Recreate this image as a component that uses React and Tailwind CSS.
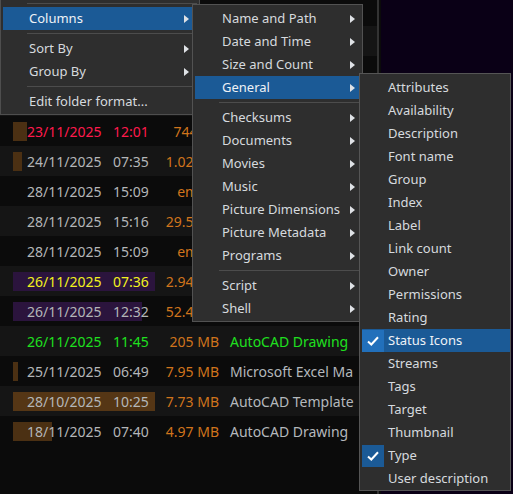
import React from 'react';

const rows = [
    { date: '23/11/2025', time: '12:01', size: '744 KB', tone: 'text-[#ff1a4d]', bar: 14, barColor: 'bg-[#4b3013]' },
    { date: '24/11/2025', time: '07:35', size: '1.02 MB', tone: 'text-[#b4b6b8]', bar: 9, barColor: 'bg-[#4b3013]' },
    { date: '28/11/2025', time: '15:09', size: 'empty', tone: 'text-[#b4b6b8]' },
    { date: '28/11/2025', time: '15:16', size: '29.5 MB', tone: 'text-[#b4b6b8]' },
    { date: '28/11/2025', time: '15:09', size: 'empty', tone: 'text-[#b4b6b8]' },
    { date: '26/11/2025', time: '07:36', size: '2.94 MB', tone: 'text-[#f2f21e]', bar: 142, barColor: 'bg-[#2b143d]' },
    { date: '26/11/2025', time: '12:32', size: '52.4 MB', tone: 'text-[#b4b6b8]', bar: 129, barColor: 'bg-[#2b143d]' },
    { date: '26/11/2025', time: '11:45', size: '205 MB', type: 'AutoCAD Drawing', tone: 'text-[#1fe01f]', typeTone: 'text-[#1fe01f]' },
    { date: '25/11/2025', time: '06:49', size: '7.95 MB', type: 'Microsoft Excel Ma', tone: 'text-[#b4b6b8]', bar: 5, barColor: 'bg-[#4b3013]' },
    { date: '28/10/2025', time: '10:25', size: '7.73 MB', type: 'AutoCAD Template', tone: 'text-[#b4b6b8]', bar: 142, barColor: 'bg-[#553615]' },
    { date: '18/11/2025', time: '07:40', size: '4.97 MB', type: 'AutoCAD Drawing', tone: 'text-[#b4b6b8]', bar: 39, barColor: 'bg-[#4b3013]' },
];

const Arrow = () => (
    <svg width="5" height="8" viewBox="0 0 5 8" className="shrink-0">
        <polygon points="0,0 5,4 0,8" fill="#dfe2e6" />
    </svg>
);

const Check = () => (
    <svg width="12" height="10" viewBox="0 0 12 10">
        <path d="M1 5.5 L4.3 8.5 L11 1.2" stroke="#ffffff" strokeWidth="2" fill="none" />
    </svg>
);

const Sep = ({ inset }) => (
    <div className="h-[7px] flex items-center">
        <div className={`h-px flex-1 bg-[#4c4c4c] ${inset}`} />
    </div>
);

const Item = ({ label, sub, active, pl, pr }) => (
    <div className={`h-[23px] flex items-center justify-between ${pl} ${pr} ${active ? 'bg-[#1b5a96] text-[#eef2f6]' : 'text-[#d6dade]'}`}>
        <span className="whitespace-nowrap">{label}</span>
        {sub && <Arrow />}
    </div>
);

const FileRow = ({ row, light }) => (
    <div className={`h-[30px] flex items-center whitespace-nowrap ${light ? 'bg-[#151515]' : 'bg-[#0b0b0b]'}`}>
        {row && (
            <>
                <div className={`relative shrink-0 ml-[13px] h-[19px] w-[145px] flex items-center ${row.tone}`}>
                    {row.bar && <div className={`absolute left-0 top-0 h-full ${row.barColor}`} style={{ width: row.bar }} />}
                    <span className="relative w-[100px] pl-[14px]">{row.date}</span>
                    <span className="relative">{row.time}</span>
                </div>
                <span className="shrink-0 w-[61px] text-right text-[#d0741c]">{row.size}</span>
                {row.type && <span className={`ml-[11px] ${row.typeTone || 'text-[#b4b8bc]'}`}>{row.type}</span>}
            </>
        )}
    </div>
);

const third = ['Attributes', 'Availability', 'Description', 'Font name', 'Group', 'Index', 'Label', 'Link count', 'Owner', 'Permissions', 'Rating', 'Status Icons', 'Streams', 'Tags', 'Target', 'Thumbnail', 'Type', 'User description'];

export default function App() {
    return (
        <div className="relative w-[513px] h-[494px] overflow-hidden bg-[#0b0b0b] font-['Noto_Sans',sans-serif]">
            {/* file list behind the menus */}
            <div className="flex h-full">
                <div className="w-[377px] overflow-hidden text-[14px] mt-[-4px]">
                    {[0, 1, 2, 3].map(i => <FileRow key={'e' + i} light={i % 2 === 1} />)}
                    {rows.map((r, i) => <FileRow key={i} row={r} light={i % 2 === 1} />)}
                </div>
                <div className="w-[2px] bg-[#333333]" />
                <div className="w-[2px] bg-[#0b0b0b]" />
                <div className="flex-1 bg-[#0a0016]" />
            </div>

            {/* view menu */}
            <div className="absolute left-0 top-0 w-[200px] bg-[#2e2e2e] border-x border-b border-[#4e4e4e] px-[2px] pb-[1px] text-[13px]">
                <Sep inset="ml-[24px]" />
                <Item label="Columns" sub active pl="pl-[26px]" pr="pr-[8px]" />
                <Sep inset="ml-[24px]" />
                <Item label="Sort By" sub pl="pl-[26px]" pr="pr-[8px]" />
                <Item label="Group By" sub pl="pl-[26px]" pr="pr-[8px]" />
                <Sep inset="ml-[24px]" />
                <Item label="Edit folder format..." pl="pl-[26px]" pr="pr-[8px]" />
            </div>

            {/* columns submenu */}
            <div className="absolute left-[192px] top-[4px] w-[171px] bg-[#2e2e2e] border border-[#525252] pl-[2px] pr-[2px] pt-[2px] pb-[1px] text-[13px]">
                <Item label="Name and Path" sub pl="pl-[27px]" pr="pr-[5px]" />
                <Item label="Date and Time" sub pl="pl-[27px]" pr="pr-[5px]" />
                <Item label="Size and Count" sub pl="pl-[27px]" pr="pr-[5px]" />
                <Item label="General" sub active pl="pl-[27px]" pr="pr-[5px]" />
                <Sep inset="ml-[24px]" />
                <Item label="Checksums" sub pl="pl-[27px]" pr="pr-[5px]" />
                <Item label="Documents" sub pl="pl-[27px]" pr="pr-[5px]" />
                <Item label="Movies" sub pl="pl-[27px]" pr="pr-[5px]" />
                <Item label="Music" sub pl="pl-[27px]" pr="pr-[5px]" />
                <Item label="Picture Dimensions" sub pl="pl-[27px]" pr="pr-[5px]" />
                <Item label="Picture Metadata" sub pl="pl-[27px]" pr="pr-[5px]" />
                <Item label="Programs" sub pl="pl-[27px]" pr="pr-[5px]" />
                <Sep inset="ml-[24px]" />
                <Item label="Script" sub pl="pl-[27px]" pr="pr-[5px]" />
                <Item label="Shell" sub pl="pl-[27px]" pr="pr-[5px]" />
            </div>

            {/* general submenu */}
            <div className="absolute left-[359px] top-[73px] w-[152px] bg-[#2e2e2e] border border-[#555555] pl-[2px] pt-[2px] text-[13px]">
                {third.map(label => {
                    const active = label === 'Status Icons';
                    const checked = active || label === 'Type';
                    return (
                        <div key={label} className={`h-[23px] flex items-center ${active ? 'bg-[#1b5a96] text-[#eef2f6]' : 'text-[#d6dade]'}`}>
                            <div className={`w-[22px] h-[22px] flex items-center justify-center ${checked ? (active ? 'bg-[#2270bb]' : 'bg-[#1b5a96]') : ''}`}>
                                {checked && <Check />}
                            </div>
                            <span className="ml-[4px] whitespace-nowrap">{label}</span>
                        </div>
                    );
                })}
            </div>
        </div>
    );
}
